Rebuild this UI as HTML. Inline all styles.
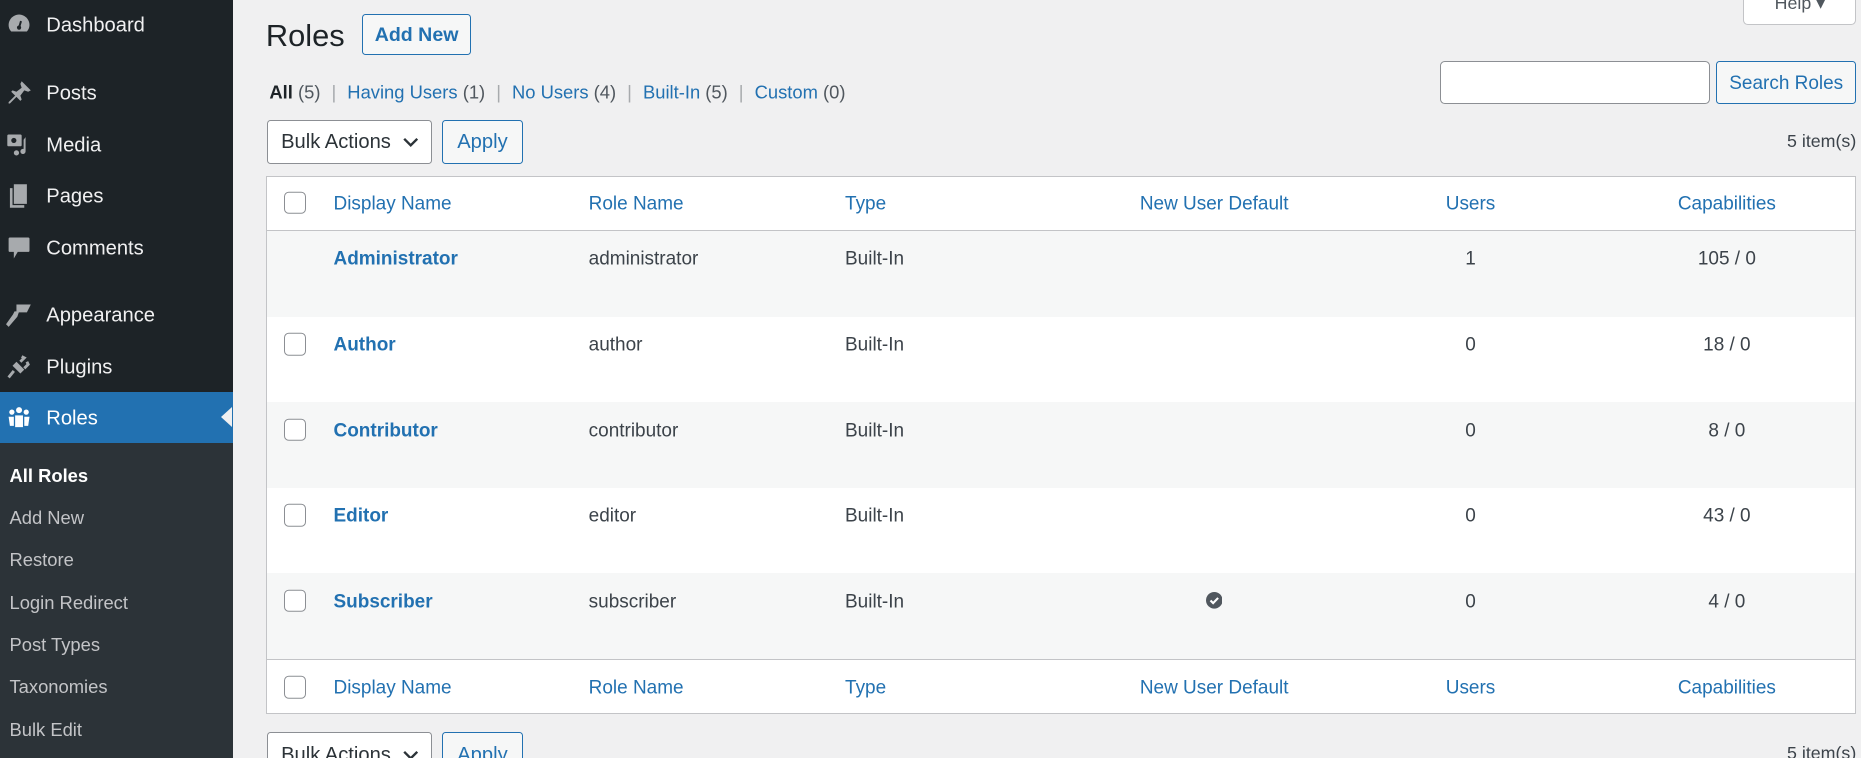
<!DOCTYPE html>
<html><head><meta charset="utf-8"><style>
html,body{margin:0;padding:0;width:1861px;height:758px;overflow:hidden;background:#f0f0f1}
#z{zoom:1.18686;position:relative;width:1568px;height:639px;font-family:"Liberation Sans",sans-serif;color:#3c434a}
.a{position:absolute;white-space:nowrap}
#sb{position:absolute;left:0;top:0;width:196px;height:639px;background:#1d2327}
#sub{position:absolute;left:0;top:373px;width:196px;height:266px;background:#2c3338}
.mi{position:absolute;left:39px;font-size:17px;color:#f0f0f1;transform:translateY(-45%)}
.ic{position:absolute;left:5px;width:22px;height:22px;transform:translateY(-50%)}
.si{position:absolute;left:8px;font-size:15.5px;color:#c3c4c7;transform:translateY(-45%)}
.btn{position:absolute;border:1px solid #2271b1;border-radius:3px;background:#f6f7f7;color:#2271b1;font-size:16px;display:flex;align-items:center;justify-content:center;box-sizing:border-box;padding-top:2px}
.sel{position:absolute;border:1px solid #8c8f94;border-radius:3px;background:#fff;color:#2c3338;font-size:17px;box-sizing:border-box;padding-left:11px;padding-top:2px;display:flex;align-items:center}
.c{transform:translateY(-44%)}
.cc{transform:translate(-50%,-44%)}
.lk{color:#2271b1}
.cb{position:absolute;left:239px;width:19px;height:19px;border:1px solid #8c8f94;border-radius:4px;background:#fff;box-sizing:border-box;transform:translateY(-50%)}
.row{position:absolute;left:225px;width:1338px}
.t{font-size:16px}
.sp{color:#a7aaad;margin:0 5px}
</style></head><body><div id="z">
<div id="sb">
<div id="sub"></div>
<div style="position:absolute;left:0;top:330px;width:196px;height:43px;background:#2271b1"></div>
<div style="position:absolute;left:186px;top:343px;width:0;height:0;border-top:9px solid transparent;border-bottom:9px solid transparent;border-right:10px solid #f0f0f1"></div>
<svg class="ic" style="top:21px" viewBox="0 0 20 20"><path d="M10 2a8 8 0 0 0-8 8c0 2 .7 3.7 2 5h12a8 8 0 0 0 2-5 8 8 0 0 0-8-8z" fill="#a7aaad"/><circle cx="10" cy="12" r="1.6" fill="#1d2327"/><path d="M10 12l1.5-5" stroke="#1d2327" stroke-width="1.5"/></svg>
<div class="mi" style="top:21px">Dashboard</div>
<svg class="ic" style="top:78px" viewBox="0 0 20 20"><path d="M12 1l7 7-2 1-3-1-3 4 1 3-1 1-3-3-5 5-1 0 0-1 5-5-3-3 1-1 3 1 4-3-1-3z" fill="#a7aaad"/></svg>
<div class="mi" style="top:78px">Posts</div>
<svg class="ic" style="top:122px" viewBox="0 0 20 20"><rect x="1" y="2" width="11" height="9" rx="1" fill="#a7aaad"/><circle cx="6" cy="6.5" r="2" fill="#1d2327"/><path d="M15 4v11a2 2 0 1 1-1.5-2V6z" fill="#a7aaad"/><circle cx="8" cy="16" r="2" fill="#a7aaad"/></svg>
<div class="mi" style="top:122px">Media</div>
<svg class="ic" style="top:165px" viewBox="0 0 20 20"><path d="M6 1h10v15H6z" fill="#a7aaad"/><path d="M3 4h2v13h9v2H3z" fill="#a7aaad"/></svg>
<div class="mi" style="top:165px">Pages</div>
<svg class="ic" style="top:209px" viewBox="0 0 20 20"><path d="M3 2h14a1 1 0 0 1 1 1v9a1 1 0 0 1-1 1H9l-3 5v-5H3a1 1 0 0 1-1-1V3a1 1 0 0 1 1-1z" fill="#a7aaad"/></svg>
<div class="mi" style="top:209px">Comments</div>
<svg class="ic" style="top:265px" viewBox="0 0 20 20"><path d="M8 2h11l-3 6H8z" fill="#a7aaad"/><path d="M9 8l-1 3-6 7-1-1 5-7 1-2z" fill="#a7aaad" stroke="#a7aaad" stroke-width="1.5"/></svg>
<div class="mi" style="top:265px">Appearance</div>
<svg class="ic" style="top:309px" viewBox="0 0 20 20"><path d="M8 6l6 6-3 3-6-6z" fill="#a7aaad"/><path d="M12 2l2 1-3 3M16 6l1 2-3 3M6 13l-4 5" stroke="#a7aaad" stroke-width="2.2" fill="none"/></svg>
<div class="mi" style="top:309px">Plugins</div>
<svg class="ic" style="top:352px" viewBox="0 0 20 20" fill="#fff"><circle cx="10" cy="4" r="2.3"/><circle cx="4.5" cy="5.5" r="2"/><circle cx="15.5" cy="5.5" r="2"/><path d="M7 8h6v9H7z"/><path d="M2 9h4v7H3z"/><path d="M14 9h4l-1 7h-3z"/></svg>
<div class="mi" style="top:352px;color:#fff">Roles</div>
<div class="si" style="top:400px;color:#fff;font-weight:bold">All Roles</div>
<div class="si" style="top:436px">Add New</div>
<div class="si" style="top:471px">Restore</div>
<div class="si" style="top:507px">Login Redirect</div>
<div class="si" style="top:543px">Post Types</div>
<div class="si" style="top:578px">Taxonomies</div>
<div class="si" style="top:614px">Bulk Edit</div>
</div>

<div class="a c" style="left:224px;top:29px;font-size:26px;color:#1d2327">Roles</div>
<div class="btn" style="left:305px;top:12px;width:92px;height:34px;font-size:16.5px;font-weight:bold;background:#f6f7f7">Add New</div>
<div class="a" style="left:1469px;top:-12px;width:95px;height:33px;background:#fff;border:1px solid #c3c4c7;border-radius:0 0 4px 4px;box-sizing:border-box;font-size:15px;color:#50575e;text-align:center;line-height:28px">Help ▾</div>
<div class="a c" style="left:227px;top:77px;font-size:15.5px;color:#50575e"><b style="color:#1d2327;font-weight:600">All</b> (5) <span class="sp">|</span> <span class="lk">Having Users</span> (1) <span class="sp">|</span> <span class="lk">No Users</span> (4) <span class="sp">|</span> <span class="lk">Built-In</span> (5) <span class="sp">|</span> <span class="lk">Custom</span> (0)</div>
<div class="a" style="left:1213px;top:51px;width:228px;height:37px;background:#fff;border:1px solid #8c8f94;border-radius:4px;box-sizing:border-box"></div>
<div class="btn" style="left:1446px;top:51px;width:118px;height:37px">Search Roles</div>
<div class="sel" style="left:225px;top:101px;width:139px;height:37px">Bulk Actions<svg style="position:absolute;right:11px;top:14px" width="13" height="9" viewBox="0 0 13 9"><path d="M1 1.5l5.5 5.5 5.5-5.5" stroke="#2c3338" stroke-width="2" fill="none"/></svg></div>
<div class="btn" style="left:372px;top:101px;width:69px;height:37px;font-size:17px">Apply</div>
<div class="a c" style="right:4px;top:118px;font-size:15px">5 item(s)</div>

<div class="a" style="left:224px;top:148px;width:1340px;height:454px;background:#fff;border:1px solid #c3c4c7;box-sizing:border-box"></div>
<div class="row" style="top:194px;height:1px;background:#c3c4c7"></div>
<div class="row" style="top:195px;height:72px;background:#f6f7f7"></div>
<div class="row" style="top:339px;height:72px;background:#f6f7f7"></div>
<div class="row" style="top:483px;height:72px;background:#f6f7f7"></div>
<div class="row" style="top:555px;height:1px;background:#c3c4c7"></div>

<div class="cb" style="top:171px"></div>
<div class="a c t lk" style="left:281px;top:171px">Display Name</div>
<div class="a c t lk" style="left:496px;top:171px">Role Name</div>
<div class="a c t lk" style="left:712px;top:171px">Type</div>
<div class="a cc t lk" style="left:1023px;top:171px">New User Default</div>
<div class="a cc t lk" style="left:1239px;top:171px">Users</div>
<div class="a cc t lk" style="left:1455px;top:171px">Capabilities</div>

<div class="cb" style="top:579px"></div>
<div class="a c t lk" style="left:281px;top:579px">Display Name</div>
<div class="a c t lk" style="left:496px;top:579px">Role Name</div>
<div class="a c t lk" style="left:712px;top:579px">Type</div>
<div class="a cc t lk" style="left:1023px;top:579px">New User Default</div>
<div class="a cc t lk" style="left:1239px;top:579px">Users</div>
<div class="a cc t lk" style="left:1455px;top:579px">Capabilities</div>

<div class="a c t lk" style="left:281px;top:217px;font-weight:bold">Administrator</div>
<div class="a c t" style="left:496px;top:217px">administrator</div>
<div class="a c t" style="left:712px;top:217px">Built-In</div>
<div class="a cc t" style="left:1239px;top:217px">1</div>
<div class="a cc t" style="left:1455px;top:217px">105 / 0</div>

<div class="cb" style="top:290px"></div>
<div class="a c t lk" style="left:281px;top:290px;font-weight:bold">Author</div>
<div class="a c t" style="left:496px;top:290px">author</div>
<div class="a c t" style="left:712px;top:290px">Built-In</div>
<div class="a cc t" style="left:1239px;top:290px">0</div>
<div class="a cc t" style="left:1455px;top:290px">18 / 0</div>

<div class="cb" style="top:362px"></div>
<div class="a c t lk" style="left:281px;top:362px;font-weight:bold">Contributor</div>
<div class="a c t" style="left:496px;top:362px">contributor</div>
<div class="a c t" style="left:712px;top:362px">Built-In</div>
<div class="a cc t" style="left:1239px;top:362px">0</div>
<div class="a cc t" style="left:1455px;top:362px">8 / 0</div>

<div class="cb" style="top:434px"></div>
<div class="a c t lk" style="left:281px;top:434px;font-weight:bold">Editor</div>
<div class="a c t" style="left:496px;top:434px">editor</div>
<div class="a c t" style="left:712px;top:434px">Built-In</div>
<div class="a cc t" style="left:1239px;top:434px">0</div>
<div class="a cc t" style="left:1455px;top:434px">43 / 0</div>

<div class="cb" style="top:506px"></div>
<div class="a c t lk" style="left:281px;top:506px;font-weight:bold">Subscriber</div>
<div class="a c t" style="left:496px;top:506px">subscriber</div>
<div class="a c t" style="left:712px;top:506px">Built-In</div>
<svg class="a" style="left:1016px;top:499px" width="14" height="14" viewBox="0 0 14 14"><circle cx="7" cy="7" r="7" fill="#50575e"/><path d="M3.8 7.2l2.2 2.2 4.2-4.4" stroke="#fff" stroke-width="1.8" fill="none"/></svg>
<div class="a cc t" style="left:1239px;top:506px">0</div>
<div class="a cc t" style="left:1455px;top:506px">4 / 0</div>

<div class="sel" style="left:225px;top:617px;width:139px;height:37px">Bulk Actions<svg style="position:absolute;right:11px;top:14px" width="13" height="9" viewBox="0 0 13 9"><path d="M1 1.5l5.5 5.5 5.5-5.5" stroke="#2c3338" stroke-width="2" fill="none"/></svg></div>
<div class="btn" style="left:372px;top:617px;width:69px;height:37px;font-size:17px">Apply</div>
<div class="a c" style="right:4px;top:634px;font-size:15px">5 item(s)</div>
</div></body></html>
